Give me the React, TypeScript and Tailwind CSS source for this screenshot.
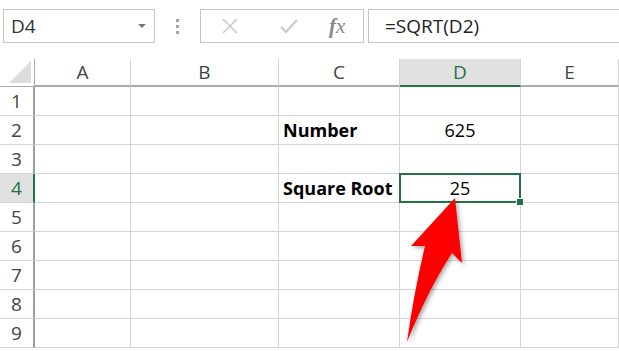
import React from 'react';

const cols = ['A', 'B', 'C', 'D', 'E'];
const rows = [1, 2, 3, 4, 5, 6, 7, 8, 9];

const cellText: Record<string, { text: string; bold?: boolean; center?: boolean }> = {
  C2: { text: 'Number', bold: true },
  D2: { text: '625', center: true },
  C4: { text: 'Square Root', bold: true },
  D4: { text: '25', center: true },
};

const App = () => {
  return (
    <div className="relative w-[619px] h-[351px] overflow-hidden bg-white font-['Open_Sans',sans-serif]">
      {/* Formula bar */}
      <div className="flex items-center h-[59px] pt-[9px] pb-[16px] pl-[3px] bg-white">
        <div className="flex items-center justify-between w-[152px] h-[34px] border border-[#c6c6c6] pl-[7px] pr-[8px]">
          <span className="text-[19px] text-[#333] leading-none">D4</span>
          <svg width="8" height="5" viewBox="0 0 8 5">
            <path d="M0 0h8L4 4z" fill="#777" />
          </svg>
        </div>
        <div className="flex flex-col gap-[3px] w-[45px] items-center">
          <span className="w-[3px] h-[3px] bg-[#a6a6a6]" />
          <span className="w-[3px] h-[3px] bg-[#a6a6a6]" />
          <span className="w-[3px] h-[3px] bg-[#a6a6a6]" />
        </div>
        <div className="flex items-center w-[164px] h-[34px] border border-[#c6c6c6]">
          <svg className="ml-[20px]" width="18" height="18" viewBox="0 0 18 18">
            <path d="M2 2L16 16M16 2L2 16" stroke="#c8c8c8" strokeWidth="1.6" />
          </svg>
          <svg className="ml-[40px]" width="20" height="18" viewBox="0 0 20 18">
            <path d="M2 10l5 5L18 3" stroke="#c8c8c8" strokeWidth="2.2" fill="none" />
          </svg>
          <span className="ml-[30px] text-[21px] italic text-[#888] font-['Liberation_Serif',serif] leading-none">
            <span className="font-bold">f</span>x
          </span>
        </div>
        <div className="flex items-center flex-1 h-[34px] ml-[4px] border border-[#c6c6c6] border-r-0 pl-[16px]">
          <span className="text-[19px] text-[#222] leading-none">=SQRT(D2)</span>
        </div>
      </div>

      {/* Sheet grid */}
      <div className="grid grid-cols-[35px_96px_148px_121px_121px_1fr] grid-rows-[28px_repeat(9,29px)] text-[#444]">
        <div className="relative border-r border-b border-[#ababab] bg-white">
          <svg className="absolute right-[3px] bottom-[3px]" width="22" height="22" viewBox="0 0 22 22">
            <path d="M22 0V22H0z" fill="#dcdcdc" />
          </svg>
        </div>
        {cols.map((c) => (
          <div
            key={c}
            className={`flex items-center justify-center text-[19px] border-b-[2px] border-r border-r-[#d4d4d4] ${
              c === 'D' ? 'bg-[#e1e1e1] text-[#217346] border-b-[#217346]' : 'bg-white border-b-[#ababab]'
            }`}
          >
            {c}
          </div>
        ))}
        {rows.map((r) => (
          <React.Fragment key={r}>
            <div
              className={`flex items-center justify-center text-[19px] border-b border-b-[#d4d4d4] border-r-[2px] ${
                r === 4 ? 'bg-[#e1e1e1] text-[#217346] border-r-[#217346]' : 'bg-white border-r-[#9e9e9e]'
              }`}
            >
              {r}
            </div>
            {cols.map((c) => {
              const cell = cellText[`${c}${r}`];
              return (
                <div
                  key={c}
                  className={`relative flex items-center border-r border-b border-[#d4d4d4] text-black text-[18px] ${
                    cell?.center ? 'justify-center' : 'pl-[4px]'
                  } ${cell?.bold ? 'font-bold' : ''} ${c === 'D' && r === 4 ? 'z-10' : ''}`}
                >
                  {cell && <span className="whitespace-nowrap leading-none">{cell.text}</span>}
                  {c === 'D' && r === 4 && (
                    <div className="absolute -left-[1px] -top-[1px] right-[-1px] bottom-[-1px] border-2 border-[#217346]">
                      <span className="absolute -right-[5px] -bottom-[5px] w-[8px] h-[8px] bg-[#217346] border border-white" />
                    </div>
                  )}
                </div>
              );
            })}
          </React.Fragment>
        ))}
      </div>

      {/* Callout arrow */}
      <svg className="absolute left-0 top-0 z-20 pointer-events-none" width="619" height="351" viewBox="0 0 619 351">
        <defs>
          <filter id="sh" x="-50%" y="-50%" width="200%" height="200%">
            <feDropShadow dx="2" dy="2" stdDeviation="2" floodColor="#000" floodOpacity="0.35" />
          </filter>
        </defs>
        <path
          d="M455 198 L462 263 L452 253 Q428 290 407 342 Q414 292 425 246 L411 246 Z"
          fill="#ff0000"
          filter="url(#sh)"
        />
      </svg>
    </div>
  );
};

export default App;
